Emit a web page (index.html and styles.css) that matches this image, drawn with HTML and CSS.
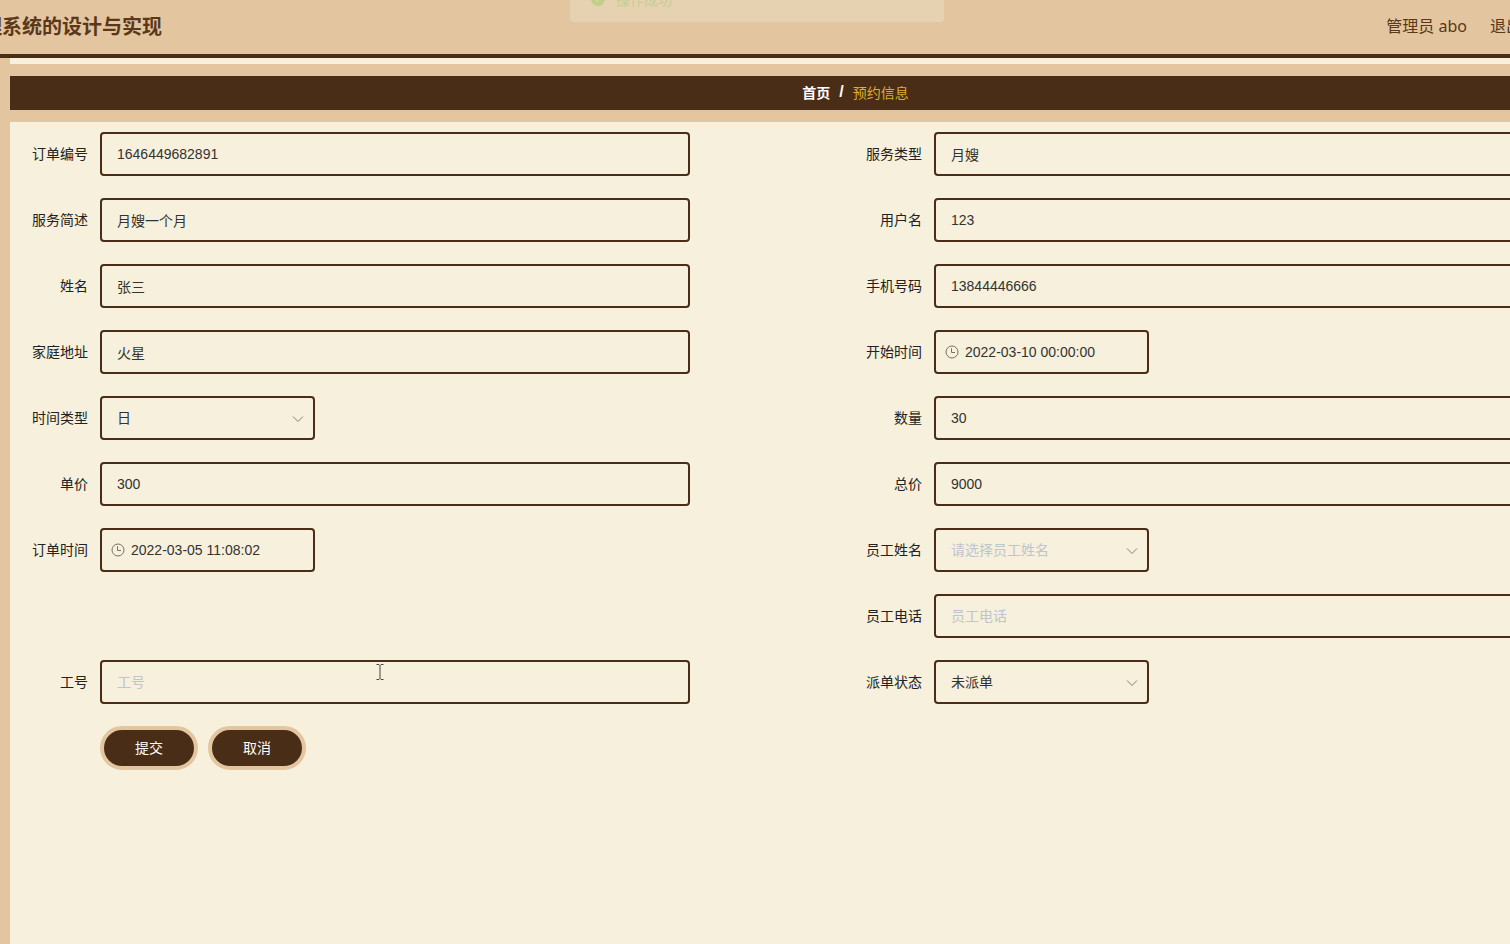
FILE: index.html
```
<!DOCTYPE html>
<html lang="zh-CN">
<head>
    <meta charset="UTF-8">
    <meta name="viewport" content="width=device-width, initial-scale=1.0">
    <title>预约信息</title>
    <link rel="stylesheet" href="styles.css">
</head>
<body>

    <div class="page">
        <header class="header">
            <h1 class="title">理系统的设计与实现</h1>
            <div class="user-nav">
                <span>管理员 abo</span>
                <a href="#">退出登录</a>
            </div>
        </header>

        <main class="main">
            <div class="tabs-strip"></div>

            <nav class="breadcrumb">
                <a href="#">首页</a>
                <span class="separator">/</span>
                <span class="current">预约信息</span>
            </nav>

            <form class="form">
                <div class="field">
                    <label for="orderNo">订单编号</label>
                    <input class="control" type="text" id="orderNo" value="1646449682891">
                </div>
                <div class="field">
                    <label for="serviceType">服务类型</label>
                    <input class="control" type="text" id="serviceType" value="月嫂">
                </div>
                <div class="field">
                    <label for="summary">服务简述</label>
                    <input class="control" type="text" id="summary" value="月嫂一个月">
                </div>
                <div class="field">
                    <label for="username">用户名</label>
                    <input class="control" type="text" id="username" value="123">
                </div>
                <div class="field">
                    <label for="fullName">姓名</label>
                    <input class="control" type="text" id="fullName" value="张三">
                </div>
                <div class="field">
                    <label for="phone">手机号码</label>
                    <input class="control" type="text" id="phone" value="13844446666">
                </div>
                <div class="field">
                    <label for="address">家庭地址</label>
                    <input class="control" type="text" id="address" value="火星">
                </div>
                <div class="field">
                    <label for="startTime">开始时间</label>
                    <div class="short date">
                        <svg class="clock" viewBox="0 0 14 14"><circle cx="7" cy="7" r="6"/><path d="M6.5 3.2V7.5H10"/></svg>
                        <input class="control" type="text" id="startTime" value="2022-03-10 00:00:00">
                    </div>
                </div>
                <div class="field">
                    <label for="timeType">时间类型</label>
                    <div class="short">
                        <select class="control" id="timeType">
                            <option>日</option>
                        </select>
                        <svg class="arrow" viewBox="0 0 12 8"><path d="M1 1.5L6 6.5L11 1.5"/></svg>
                    </div>
                </div>
                <div class="field">
                    <label for="amount">数量</label>
                    <input class="control" type="text" id="amount" value="30">
                </div>
                <div class="field">
                    <label for="price">单价</label>
                    <input class="control" type="text" id="price" value="300">
                </div>
                <div class="field">
                    <label for="total">总价</label>
                    <input class="control" type="text" id="total" value="9000">
                </div>
                <div class="field">
                    <label for="orderTime">订单时间</label>
                    <div class="short date">
                        <svg class="clock" viewBox="0 0 14 14"><circle cx="7" cy="7" r="6"/><path d="M6.5 3.2V7.5H10"/></svg>
                        <input class="control" type="text" id="orderTime" value="2022-03-05 11:08:02">
                    </div>
                </div>
                <div class="field">
                    <label for="staffName">员工姓名</label>
                    <div class="short">
                        <select class="control empty" id="staffName">
                            <option>请选择员工姓名</option>
                        </select>
                        <svg class="arrow" viewBox="0 0 12 8"><path d="M1 1.5L6 6.5L11 1.5"/></svg>
                    </div>
                </div>
                <div class="field second">
                    <label for="staffPhone">员工电话</label>
                    <input class="control" type="text" id="staffPhone" placeholder="员工电话">
                </div>
                <div class="field">
                    <label for="staffNo">工号</label>
                    <input class="control" type="text" id="staffNo" placeholder="工号">
                </div>
                <div class="field">
                    <label for="status">派单状态</label>
                    <div class="short">
                        <select class="control" id="status">
                            <option>未派单</option>
                        </select>
                        <svg class="arrow" viewBox="0 0 12 8"><path d="M1 1.5L6 6.5L11 1.5"/></svg>
                    </div>
                </div>

                <div class="buttons">
                    <button type="button">提交</button>
                    <button type="button">取消</button>
                </div>
            </form>
        </main>
    </div>

    <!-- Success message sliding out at the top -->
    <div class="message">
        <svg class="message-icon" viewBox="0 0 16 16"><circle cx="8" cy="8" r="7.5"/><path d="M4.5 8L7 10.5L11.5 5.5"/></svg>
        <span>操作成功</span>
    </div>

    <!-- Text cursor -->
    <svg class="cursor" viewBox="0 0 8 18"><path d="M0.5 1.5H3L4 2.5L5 1.5H7.5M4 2.5V15.5M0.5 16.5H3L4 15.5L5 16.5H7.5"/></svg>

</body>
</html>
```
FILE: styles.css
```
* {
    box-sizing: border-box;
}

html {
    overflow: hidden;
}

body {
    margin: 0;
    background: #e3c6a0;
    font-family: "Liberation Sans", "Noto Sans CJK SC", sans-serif;
    font-size: 14px;
    color: #222;
}

/* The page is wider than the window and runs off the right side */
.page {
    min-height: 100vh;
    margin-right: -191px;
    display: flex;
    flex-direction: column;
}

.header {
    height: 58px;
    padding-right: 147px;
    border-bottom: 4px solid #492d16;
    display: flex;
    justify-content: space-between;
    align-items: center;
    background: #e3c5a0;
    color: #5a3819;
}

.title {
    margin: 0 0 0 -18px;
    font-size: 20px;
    line-height: 28px;
    font-weight: bold;
}

.user-nav {
    padding-bottom: 2px;
    display: flex;
    gap: 23px;
    font-family: "Noto Sans", "Noto Sans CJK SC", sans-serif;
    font-size: 16px;
    line-height: 24px;
}

.user-nav a {
    color: inherit;
    text-decoration: none;
}

.main {
    flex: 1;
    margin-left: 10px;
    display: flex;
    flex-direction: column;
}

.tabs-strip {
    height: 6px;
    background: #f8f0dc;
}

.breadcrumb {
    height: 34px;
    margin: 12px 0;
    padding-bottom: 2px;
    display: flex;
    justify-content: center;
    align-items: center;
    gap: 9px;
    background: #492d16;
    color: #fff;
    font-weight: bold;
}

.breadcrumb a {
    color: #fff;
    text-decoration: none;
}

.breadcrumb .separator {
    font-size: 16px;
}

.breadcrumb .current {
    color: #dcb030;
    font-weight: normal;
}

.form {
    flex: 1;
    padding: 10px 13px 10px 10px;
    display: grid;
    grid-template-columns: 1fr 1fr;
    align-content: start;
    row-gap: 22px;
    background: #f6f0dc;
}

.field {
    padding-right: 164px;
    display: flex;
    align-items: center;
}

.field.second {
    grid-column: 2;
}

.field label {
    width: 80px;
    padding: 0 12px 2px 0;
    flex-shrink: 0;
    text-align: right;
}

.control {
    width: 100%;
    height: 44px;
    padding: 0 15px;
    border: 2px solid #492d16;
    border-radius: 4px;
    outline: none;
    appearance: none;
    background: transparent;
    color: #333;
    font-family: inherit;
    font-size: 14px;
}

.control::placeholder,
.control.empty {
    color: #c0c4cc;
    opacity: 1;
}

.short {
    position: relative;
    width: 215px;
}

.date .control {
    padding-left: 29px;
}

.clock {
    position: absolute;
    left: 11px;
    top: 15px;
    width: 14px;
    height: 14px;
    fill: none;
    stroke: #777166;
}

.arrow {
    position: absolute;
    right: 11px;
    top: 19px;
    width: 12px;
    height: 8px;
    fill: none;
    stroke: #888175;
    pointer-events: none;
}

.buttons {
    grid-column: 1 / 3;
    padding-left: 80px;
    display: flex;
    gap: 10px;
}

.buttons button {
    width: 98px;
    height: 44px;
    padding: 0 0 2px;
    border: 4px solid #e3c6a0;
    border-radius: 22px;
    background: #492d16;
    color: #fff;
    font-family: inherit;
    font-size: 14px;
    cursor: pointer;
}

.message {
    position: absolute;
    top: -22px;
    left: 50%;
    width: 374px;
    height: 44px;
    margin-left: -185px;
    padding: 0 0 2px 20px;
    display: flex;
    align-items: center;
    gap: 10px;
    border-radius: 4px;
    background: #e6d1b1;
    color: #c5ce91;
}

.message-icon {
    width: 16px;
    height: 16px;
    fill: #c2cf88;
    stroke: #e6d1b1;
}

.cursor {
    position: absolute;
    left: 376px;
    top: 663px;
    width: 8px;
    height: 18px;
    fill: none;
    stroke: #444;
}
```
